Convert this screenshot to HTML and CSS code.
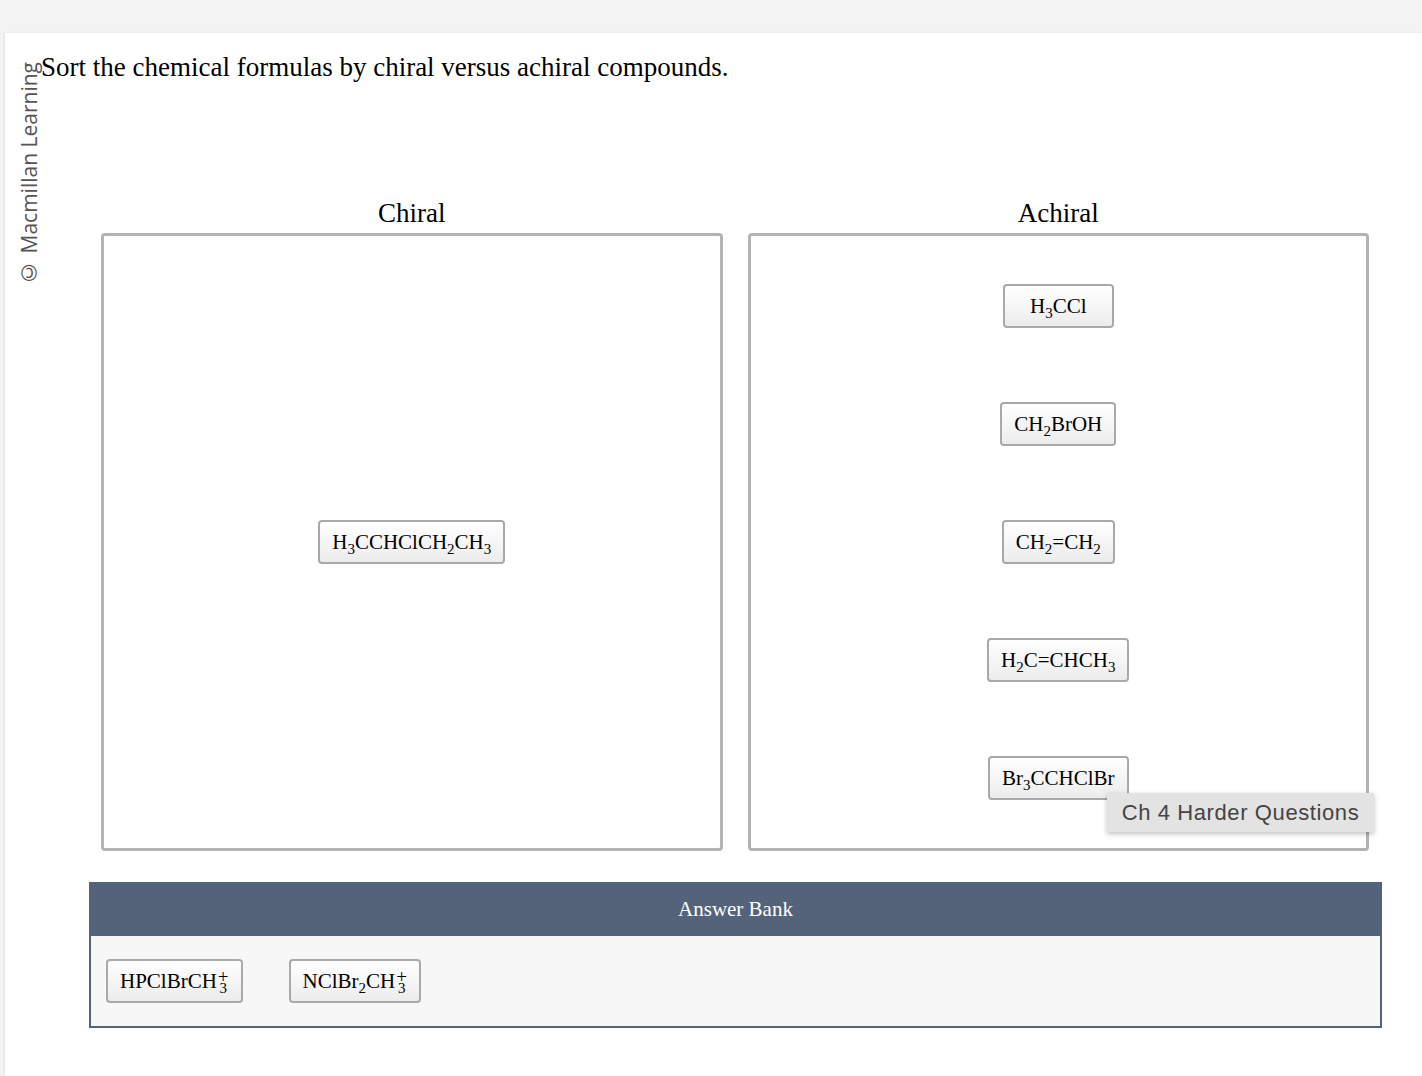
FILE: index.html
```html
<!DOCTYPE html>
<html>
<head>
<meta charset="utf-8">
<link rel="stylesheet" href="styles.css">
</head>
<body>
<div class="topbar"></div>
<div class="card">
  <div class="side"><span class="copyright">© Macmillan Learning</span></div>
  <div class="main">
    <h1 class="title">Sort the chemical formulas by chiral versus achiral compounds.</h1>
    <div class="sort-area">
      <div class="column">
        <div class="label">Chiral</div>
        <div class="bin">
          <div class="chip">H<sub>3</sub>CCHClCH<sub>2</sub>CH<sub>3</sub></div>
        </div>
      </div>
      <div class="column">
        <div class="label">Achiral</div>
        <div class="bin">
          <div class="chip">H<sub>3</sub>CCl</div>
          <div class="chip">CH<sub>2</sub>BrOH</div>
          <div class="chip">CH<sub>2</sub>=CH<sub>2</sub></div>
          <div class="chip">H<sub>2</sub>C=CHCH<sub>3</sub></div>
          <div class="chip">Br<sub>3</sub>CCHClBr</div>
        </div>
      </div>
    </div>
    <div class="bank">
      <div class="bank-head">Answer Bank</div>
      <div class="bank-body">
        <div class="chip">HPClBrCH<span class="supsub"><span class="sup">+</span><span class="sub">3</span></span></div>
        <div class="chip">NClBr<sub>2</sub>CH<span class="supsub"><span class="sup">+</span><span class="sub">3</span></span></div>
      </div>
    </div>
  </div>
  <div class="tooltip">Ch 4 Harder Questions</div>
</div>
</body>
</html>
```

FILE: styles.css
```css
html, body {
  margin: 0;
  padding: 0;
  background: #f3f3f3;
}
body {
  font-family: "Liberation Serif", "Times New Roman", serif;
  color: #000;
}
.topbar {
  height: 33px;
}
.card {
  position: relative;
  margin-left: 5px;
  background: #fff;
  height: 1043px;
  display: flex;
  box-shadow: -1px 0 2px rgba(0,0,0,0.08);
}
.side {
  width: 36px;
  flex: none;
  padding-top: 29px;
  box-sizing: border-box;
}
.copyright {
  display: block;
  writing-mode: vertical-rl;
  transform: rotate(180deg);
  font-family: "Open Sans", sans-serif;
  font-size: 21px;
  line-height: 26px;
  color: #555;
  margin-left: 11px;
  white-space: nowrap;
}
.main {
  flex: 1;
  display: flex;
  flex-direction: column;
}
.title {
  margin: 18px 0 0 0;
  font-weight: normal;
  font-size: 27px;
  line-height: 32px;
}
.sort-area {
  display: flex;
  gap: 25px;
  margin: 115px 0 0 60px;
  width: 1268px;
}
.column {
  flex: 1;
  display: flex;
  flex-direction: column;
  align-items: stretch;
}
.label {
  text-align: center;
  font-size: 27px;
  line-height: 30px;
  margin-bottom: 5px;
}
.bin {
  height: 618px;
  box-sizing: border-box;
  border: 3px solid #b3b3b3;
  border-radius: 4px;
  display: flex;
  flex-direction: column;
  align-items: center;
  justify-content: center;
  gap: 74px;
}
.chip {
  display: block;
  height: 44px;
  min-width: 111px;
  box-sizing: border-box;
  padding: 0 12px;
  border: 2px solid #a9a9a9;
  border-radius: 4px;
  background: linear-gradient(#ffffff, #ececec);
  font-size: 21px;
  line-height: 40px;
  text-align: center;
  white-space: nowrap;
}
.chip sub {
  font-size: 15px;
  vertical-align: -5px;
  line-height: 0;
}
.supsub {
  display: inline-block;
  text-align: center;
  vertical-align: -5px;
  line-height: 10px;
  margin-left: 1px;
}
.supsub .sup {
  display: block;
  font-size: 19px;
  line-height: 10px;
}
.supsub .sub {
  display: block;
  font-size: 15px;
  line-height: 12px;
}
.bank {
  margin: 31px 0 0 48px;
  width: 1293px;
  border: 2px solid #54637a;
  border-top: none;
  box-sizing: border-box;
}
.bank-head {
  height: 54px;
  background: #54637a;
  color: #fff;
  text-align: center;
  font-size: 21px;
  line-height: 54px;
  margin: 0 -2px;
}
.bank-body {
  height: 90px;
  background: #f7f7f7;
  display: flex;
  align-items: center;
  gap: 46px;
  padding-left: 15px;
  box-sizing: border-box;
}
.tooltip {
  position: absolute;
  left: 1102px;
  top: 760px;
  width: 267px;
  height: 39px;
  box-sizing: border-box;
  background: #e3e3e3;
  color: #444;
  font-family: "Liberation Sans", Arial, sans-serif;
  font-size: 22px;
  letter-spacing: 0.6px;
  line-height: 39px;
  text-align: center;
  box-shadow: 0 2px 5px rgba(0,0,0,0.25);
}
```
